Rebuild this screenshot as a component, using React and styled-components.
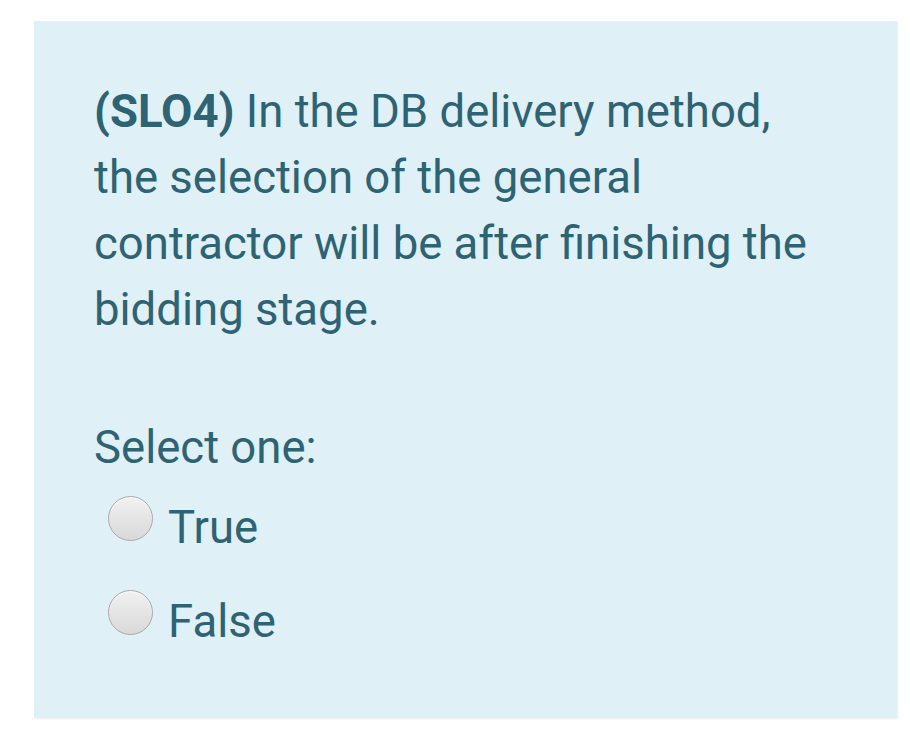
import styled, { createGlobalStyle } from "styled-components";

const GlobalStyle = createGlobalStyle`
  body {
    margin: 0;
    background: #ffffff;
    font-family: Roboto, "Liberation Sans", sans-serif;
  }
`;

const Page = styled.div`
  padding: 21px 13px 26px 34px;
`;

const QuestionCard = styled.div`
  width: 863px;
  height: 697px;
  box-sizing: border-box;
  padding: 58px 40px 60px 60px;
  background: #dff0f7;
  box-shadow: 1px 1px 2px rgba(0, 0, 0, 0.08);
  color: #2e6373;
  font-size: 45.5px;
  line-height: 66px;
`;

const QuestionText = styled.div`
  margin: 0;
  white-space: nowrap;
`;

const Tag = styled.b`
  font-weight: 700;
`;

const Prompt = styled.div`
  margin-top: 72px;
`;

const Options = styled.div`
  display: flex;
  flex-direction: column;
  gap: 28px;
  margin-top: 14px;
  padding-left: 14px;
`;

const Option = styled.label`
  display: flex;
  align-items: center;
  gap: 15px;
  cursor: pointer;
`;

const Radio = styled.span`
  width: 43px;
  height: 43px;
  flex: none;
  border-radius: 50%;
  border: 1px solid #a9a9a9;
  background: linear-gradient(180deg, #f1f1f1 0%, #e2e2e2 60%, #d9d9d9 100%);
  box-shadow: inset 0 1px 1px rgba(255, 255, 255, 0.8);
  margin-top: -20px;
`;

const OptionLabel = styled.span`
  line-height: 66px;
`;

const App = () => {
  return (
    <>
      <GlobalStyle />
      <Page>
        <QuestionCard>
          <QuestionText>
            <Tag>(SLO4)</Tag> In the DB delivery method,
            <br />
            the selection of the general
            <br />
            contractor will be after finishing the
            <br />
            bidding stage.
          </QuestionText>
          <Prompt>Select one:</Prompt>
          <Options>
            {["True", "False"].map((opt) => (
              <Option key={opt}>
                <Radio />
                <OptionLabel>{opt}</OptionLabel>
              </Option>
            ))}
          </Options>
        </QuestionCard>
      </Page>
    </>
  );
};

export default App;
